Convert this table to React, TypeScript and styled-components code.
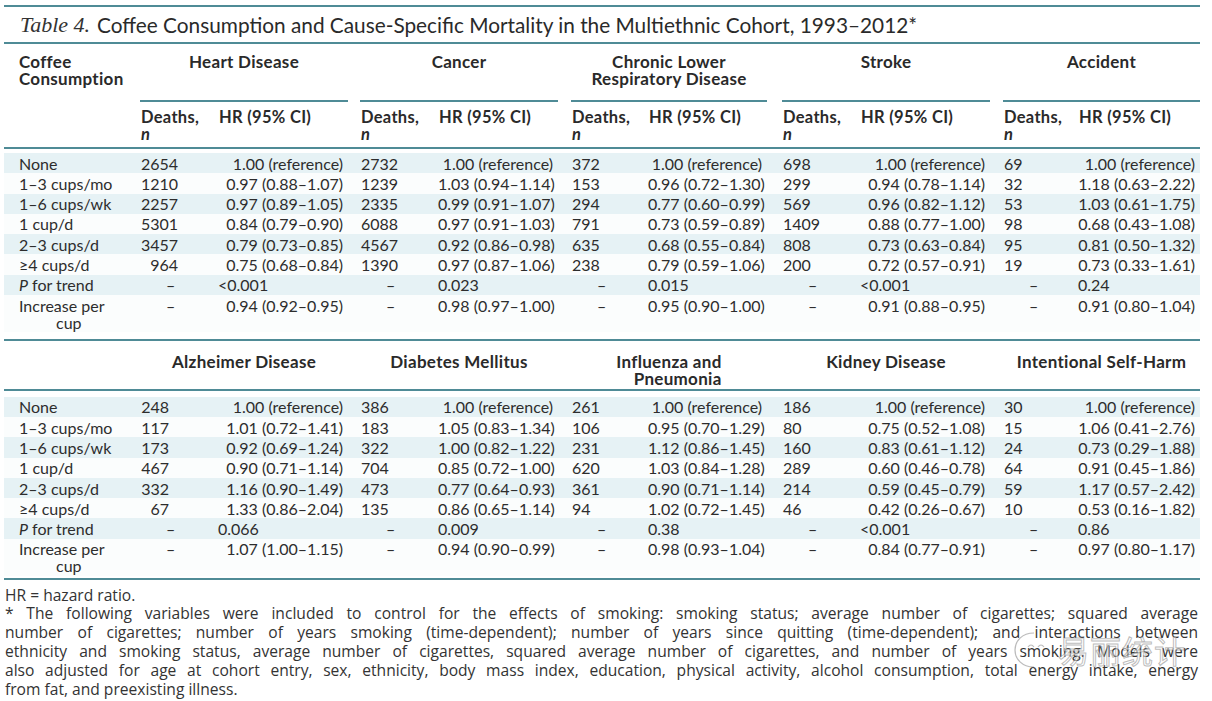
import React from 'react';
import styled, { createGlobalStyle } from 'styled-components';

const LINE = '#4f8b96';
const TEXT = '#2d2d2d';
const STRIPE = '#e6f2f5';
const GRID = '136px 78px 142px 78px 133px 77px 134px 78px 143px 75px 122px';

const GlobalStyle = createGlobalStyle`
  html, body { margin: 0; padding: 0; background: #ffffff; }
  body { font-family: Lato, "Open Sans", sans-serif; color: ${TEXT}; }
`;

type Group = {
  title: string[];
  align?: 'center' | 'right';
  gap: number;
  box?: number;
  deaths: (number | string)[];
  hr: string[];
  p: string;
  inc: string;
};

const LABELS = ['None', '1–3 cups/mo', '1–6 cups/wk', '1 cup/d', '2–3 cups/d', '≥4 cups/d'];

const TABLE1: Group[] = [
  { title: ['Heart Disease'], gap: 12, box: 37, deaths: [2654, 1210, 2257, 5301, 3457, 964],
    hr: ['1.00 (reference)', '0.97 (0.88–1.07)', '0.97 (0.89–1.05)', '0.84 (0.79–0.90)', '0.79 (0.73–0.85)', '0.75 (0.68–0.84)'],
    p: '<0.001', inc: '0.94 (0.92–0.95)' },
  { title: ['Cancer'], gap: 13, deaths: [2732, 1239, 2335, 6088, 4567, 1390],
    hr: ['1.00 (reference)', '1.03 (0.94–1.14)', '0.99 (0.91–1.07)', '0.97 (0.91–1.03)', '0.92 (0.86–0.98)', '0.97 (0.87–1.06)'],
    p: '0.023', inc: '0.98 (0.97–1.00)' },
  { title: ['Chronic Lower', 'Respiratory Disease'], gap: 15, deaths: [372, 153, 294, 791, 635, 238],
    hr: ['1.00 (reference)', '0.96 (0.72–1.30)', '0.77 (0.60–0.99)', '0.73 (0.59–0.89)', '0.68 (0.55–0.84)', '0.79 (0.59–1.06)'],
    p: '0.015', inc: '0.95 (0.90–1.00)' },
  { title: ['Stroke'], gap: 13, deaths: [698, 299, 569, 1409, 808, 200],
    hr: ['1.00 (reference)', '0.94 (0.78–1.14)', '0.96 (0.82–1.12)', '0.88 (0.77–1.00)', '0.73 (0.63–0.84)', '0.72 (0.57–0.91)'],
    p: '<0.001', inc: '0.91 (0.88–0.95)' },
  { title: ['Accident'], gap: 0, deaths: [69, 32, 53, 98, 95, 19],
    hr: ['1.00 (reference)', '1.18 (0.63–2.22)', '1.03 (0.61–1.75)', '0.68 (0.43–1.08)', '0.81 (0.50–1.32)', '0.73 (0.33–1.61)'],
    p: '0.24', inc: '0.91 (0.80–1.04)' },
];

const TABLE2: Group[] = [
  { title: ['Alzheimer Disease'], gap: 12, box: 28, deaths: [248, 117, 173, 467, 332, 67],
    hr: ['1.00 (reference)', '1.01 (0.72–1.41)', '0.92 (0.69–1.24)', '0.90 (0.71–1.14)', '1.16 (0.90–1.49)', '1.33 (0.86–2.04)'],
    p: '0.066', inc: '1.07 (1.00–1.15)' },
  { title: ['Diabetes Mellitus'], gap: 13, deaths: [386, 183, 322, 704, 473, 135],
    hr: ['1.00 (reference)', '1.05 (0.83–1.34)', '1.00 (0.82–1.22)', '0.85 (0.72–1.00)', '0.77 (0.64–0.93)', '0.86 (0.65–1.14)'],
    p: '0.009', inc: '0.94 (0.90–0.99)' },
  { title: ['Influenza and', 'Pneumonia'], align: 'right', gap: 15, deaths: [261, 106, 231, 620, 361, 94],
    hr: ['1.00 (reference)', '0.95 (0.70–1.29)', '1.12 (0.86–1.45)', '1.03 (0.84–1.28)', '0.90 (0.71–1.14)', '1.02 (0.72–1.45)'],
    p: '0.38', inc: '0.98 (0.93–1.04)' },
  { title: ['Kidney Disease'], gap: 13, deaths: [186, 80, 160, 289, 214, 46],
    hr: ['1.00 (reference)', '0.75 (0.52–1.08)', '0.83 (0.61–1.12)', '0.60 (0.46–0.78)', '0.59 (0.45–0.79)', '0.42 (0.26–0.67)'],
    p: '<0.001', inc: '0.84 (0.77–0.91)' },
  { title: ['Intentional Self-Harm'], gap: 0, deaths: [30, 15, 24, 64, 59, 10],
    hr: ['1.00 (reference)', '1.06 (0.41–2.76)', '0.73 (0.29–1.88)', '0.91 (0.45–1.86)', '1.17 (0.57–2.42)', '0.53 (0.16–1.82)'],
    p: '0.86', inc: '0.97 (0.80–1.17)' },
];

const Page = styled.div`
  position: relative;
  width: 1196px;
  padding: 5px 12px 0 4px;
`;

const TitleBar = styled.div`
  border-top: 2px solid ${LINE};
  border-bottom: 2px solid ${LINE};
  display: flex;
  align-items: center;
  gap: 7px;
  padding-left: 16px;
  box-sizing: border-box;
  height: 39px;
`;

const TitleLabel = styled.span`
  font-family: "Liberation Serif", serif;
  font-style: italic;
  font-size: 22px;
  color: #333;
`;

const TitleText = styled.span`
  font-family: Lato, sans-serif;
  font-size: 20.8px;
  color: #2a2a2a;
`;

const HeadGrid = styled.div`
  display: grid;
  grid-template-columns: ${GRID};
  border-bottom: 2px solid ${LINE};
`;

const Bold = styled.div`
  font-family: Lato, sans-serif;
  font-weight: 700;
  font-size: 17px;
  letter-spacing: 0.3px;
  line-height: 17px;
  color: #2a2a2a;
`;

const LabelHead = styled(Bold)`
  grid-row: span 2;
  padding: 9px 0 0 15px;
`;

const GroupHead = styled(Bold)<{ $gap: number; $ruled: boolean; $h: number; $pt: number }>`
  grid-column: span 2;
  margin-right: ${(p) => p.$gap}px;
  height: ${(p) => p.$h}px;
  box-sizing: border-box;
  padding-top: ${(p) => p.$pt}px;
  border-bottom: ${(p) => (p.$ruled ? `2px solid ${LINE}` : 'none')};
  text-align: center;
`;

const TitleLines = styled.span<{ $align: string }>`
  display: inline-block;
  text-align: ${(p) => p.$align};
`;

const SubHead = styled(Bold)`
  padding: 7px 0 4px 1px;
  font-size: 16.5px;
`;

const ItalicN = styled.i`
  font-style: italic;
`;

const Body = styled.div<{ $pt: number; $pb: number }>`
  padding: ${(p) => p.$pt}px 0 ${(p) => p.$pb}px;
  border-bottom: 2px solid ${LINE};
`;

const Row = styled.div<{ $shade: boolean }>`
  display: grid;
  grid-template-columns: ${GRID};
  background: ${(p) => (p.$shade ? STRIPE : '#fbfdfd')};
  padding: 1.65px 0;
  font-family: Lato, sans-serif;
  font-size: 16px;
  line-height: 17px;
  color: ${TEXT};
`;

const LabelCell = styled.div`
  padding-left: 15px;
`;

const Indent = styled.div`
  padding-left: 37px;
`;

const DeathsCell = styled.div<{ $box?: number; $dash?: boolean }>`
  padding-left: ${(p) => (p.$dash ? 26 : 1)}px;
  ${(p) => (p.$box && !p.$dash ? `width: ${p.$box}px; text-align: right;` : '')}
`;

const HrCell = styled.div<{ $gap: number; $left?: boolean }>`
  text-align: ${(p) => (p.$left ? 'left' : 'right')};
  padding-right: ${(p) => (p.$left ? 0 : p.$gap + 5)}px;
  white-space: nowrap;
`;

const Notes = styled.div`
  font-family: "Open Sans", sans-serif;
  font-size: 15.6px;
  line-height: 18.9px;
  color: #333;
  padding: 6px 2px 0 1px;
`;

const NoteLine = styled.div<{ $justify?: boolean }>`
  white-space: nowrap;
  text-align: ${(p) => (p.$justify ? 'justify' : 'left')};
  text-align-last: ${(p) => (p.$justify ? 'justify' : 'left')};
`;

const Watermark = styled.div`
  position: absolute;
  left: 1012px;
  top: 630px;
  display: flex;
  align-items: center;
  gap: 2px;
  pointer-events: none;
`;

const WatermarkText = styled.span`
  font-family: "Noto Sans CJK SC", sans-serif;
  font-size: 31px;
  line-height: 40px;
  color: rgba(255, 255, 255, 0.55);
  -webkit-text-stroke: 1px rgba(120, 120, 120, 0.5);
  letter-spacing: 1px;
`;

function Header({ groups, first }: { groups: Group[]; first: boolean }) {
  return (
    <HeadGrid>
      {first ? (
        <LabelHead>
          Coffee
          <br />
          Consumption
        </LabelHead>
      ) : (
        <div />
      )}
      {groups.map((g, i) => (
        <GroupHead key={i} $gap={g.gap} $ruled={first} $h={first ? 58 : 48} $pt={first ? 9 : 12}>
          <TitleLines $align={g.align || 'center'}>
            {g.title.map((t, j) => (
              <div key={j}>{t}</div>
            ))}
          </TitleLines>
        </GroupHead>
      ))}
      {first &&
        groups.map((g, i) => (
          <React.Fragment key={i}>
            <SubHead>
              Deaths,
              <br />
              <ItalicN>n</ItalicN>
            </SubHead>
            <SubHead>HR (95% CI)</SubHead>
          </React.Fragment>
        ))}
    </HeadGrid>
  );
}

function Table({ groups, first }: { groups: Group[]; first: boolean }) {
  return (
    <>
      <Header groups={groups} first={first} />
      <Body $pt={first ? 4 : 5.5} $pb={first ? 7 : 1.5}>
        {LABELS.map((label, r) => (
          <Row key={r} $shade={r % 2 === 0}>
            <LabelCell>{label}</LabelCell>
            {groups.map((g, i) => (
              <React.Fragment key={i}>
                <DeathsCell $box={g.box}>{g.deaths[r]}</DeathsCell>
                <HrCell $gap={g.gap}>{g.hr[r]}</HrCell>
              </React.Fragment>
            ))}
          </Row>
        ))}
        <Row $shade>
          <LabelCell>
            <ItalicN>P</ItalicN> for trend
          </LabelCell>
          {groups.map((g, i) => (
            <React.Fragment key={i}>
              <DeathsCell $dash>–</DeathsCell>
              <HrCell $gap={g.gap} $left>
                {g.p}
              </HrCell>
            </React.Fragment>
          ))}
        </Row>
        <Row $shade={false}>
          <LabelCell>
            Increase per
            <Indent>cup</Indent>
          </LabelCell>
          {groups.map((g, i) => (
            <React.Fragment key={i}>
              <DeathsCell $dash>–</DeathsCell>
              <HrCell $gap={g.gap}>{g.inc}</HrCell>
            </React.Fragment>
          ))}
        </Row>
      </Body>
    </>
  );
}

export default function App() {
  return (
    <Page>
      <GlobalStyle />
      <TitleBar>
        <TitleLabel>Table 4.</TitleLabel>
        <TitleText>Coffee Consumption and Cause-Specific Mortality in the Multiethnic Cohort, 1993–2012*</TitleText>
      </TitleBar>
      <Table groups={TABLE1} first />
      <Table groups={TABLE2} first={false} />
      <Notes>
        <NoteLine>HR = hazard ratio.</NoteLine>
        <NoteLine $justify>
          * The following variables were included to control for the effects of smoking: smoking status; average number of cigarettes; squared average
        </NoteLine>
        <NoteLine $justify>
          number of cigarettes; number of years smoking (time-dependent); number of years since quitting (time-dependent); and interactions between
        </NoteLine>
        <NoteLine $justify>
          ethnicity and smoking status, average number of cigarettes, squared average number of cigarettes, and number of years smoking. Models were
        </NoteLine>
        <NoteLine $justify>
          also adjusted for age at cohort entry, sex, ethnicity, body mass index, education, physical activity, alcohol consumption, total energy intake, energy
        </NoteLine>
        <NoteLine>from fat, and preexisting illness.</NoteLine>
      </Notes>
      <Watermark>
        <svg width="44" height="40" viewBox="0 0 44 40">
          <path d="M22 3 C10 3 3 11 3 20 C3 29 10 37 22 37" fill="none" stroke="rgba(120,120,120,0.5)" strokeWidth="1.2" />
          <path d="M16 17 q3 -4 6 0 M26 17 q3 -4 6 0" fill="none" stroke="rgba(120,120,120,0.5)" strokeWidth="1.2" />
        </svg>
        <WatermarkText>易丽统计</WatermarkText>
      </Watermark>
    </Page>
  );
}
